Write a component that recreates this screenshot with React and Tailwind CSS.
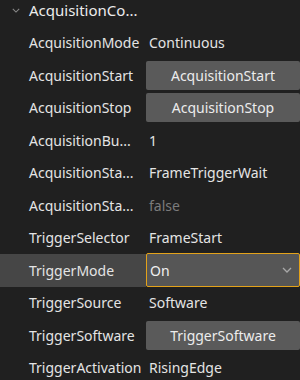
const ROWS = [
  { label: "AcquisitionMode", value: "Continuous" },
  { label: "AcquisitionStart", button: "AcquisitionStart" },
  { label: "AcquisitionStop", button: "AcquisitionStop" },
  { label: "AcquisitionBu...", value: "1" },
  { label: "AcquisitionSta...", value: "FrameTriggerWait" },
  { label: "AcquisitionSta...", value: "false", muted: true },
  { label: "TriggerSelector", value: "FrameStart" },
  { label: "TriggerMode", select: "On" },
  { label: "TriggerSource", value: "Software" },
  { label: "TriggerSoftware", button: "TriggerSoftware" },
  { label: "TriggerActivation", value: "RisingEdge" },
];

function Chevron({ className }) {
  return (
    <svg viewBox="0 0 10 6" className={className} fill="none" stroke="currentColor" strokeWidth="1.3">
      <path d="M1 1l4 4 4-4" />
    </svg>
  );
}

function Row({ row }) {
  const active = !!row.select;

  return (
    <div className="flex h-[32.5px] items-center">
      <div
        className={`flex h-full w-[146px] shrink-0 items-center pl-[29px] ${
          active ? "bg-[#464646]" : ""
        }`}
      >
        <span className="whitespace-nowrap text-[14px] text-[#e4e4e4]">{row.label}</span>
      </div>

      {row.value && (
        <span className={`pl-[3px] text-[14px] ${row.muted ? "text-[#7b7b7b]" : "text-[#e4e4e4]"}`}>
          {row.value}
        </span>
      )}

      {row.button && (
        <button
          type="button"
          className="flex h-[29px] flex-1 items-center justify-center rounded-[2px] bg-[#5a5a5a] text-[14px] text-[#ececec]"
        >
          {row.button}
        </button>
      )}

      {row.select && (
        <div className="flex h-[34px] flex-1 items-center justify-between rounded-[2px] border border-[#e3a21a] bg-[#565656] pl-[3px] pr-[7px]">
          <span className="text-[14px] text-[#f0f0f0]">{row.select}</span>
          <Chevron className="h-[6px] w-[10px] text-[#a8a8a8]" />
        </div>
      )}
    </div>
  );
}

export default function App() {
  return (
    <div
      className="h-[380px] w-[300px] overflow-hidden bg-[#202020]"
      style={{ fontFamily: '"Noto Sans", sans-serif' }}
    >
      <div className="mt-[-6px]">
        <div className="flex h-[32.5px] items-center">
          <div className="flex w-[29px] justify-center pl-[3px]">
            <Chevron className="h-[5px] w-[8px] text-[#8a8a8a]" />
          </div>
          <span className="whitespace-nowrap text-[15px] text-[#ececec]">AcquisitionCo...</span>
        </div>

        {ROWS.map((row, i) => (
          <Row key={i} row={row} />
        ))}
      </div>
    </div>
  );
}
